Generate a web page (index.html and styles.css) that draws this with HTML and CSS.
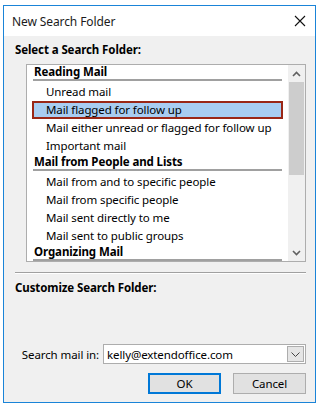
FILE: index.html
```html
<!DOCTYPE html>
<html lang="en">
<head>
    <meta charset="UTF-8">
    <title>New Search Folder</title>
    <link rel="stylesheet" href="styles.css">
</head>
<body>

    <div class="window">
        <div class="titlebar">
            <span class="title">New Search Folder</span>
            <svg class="close" width="12" height="12" viewBox="0 0 12 12">
                <path d="M1 1 L11 11 M11 1 L1 11" stroke="#111" stroke-width="1.1" fill="none"/>
            </svg>
        </div>

        <div class="dialog-body">
            <div class="label bold">Select a Search Folder:</div>

            <div class="listbox">
                <div class="list-items">
                    <div class="group">Reading Mail</div>
                    <div class="item">Unread mail</div>
                    <div class="item selected">Mail flagged for follow up</div>
                    <div class="item">Mail either unread or flagged for follow up</div>
                    <div class="item">Important mail</div>
                    <div class="group">Mail from People and Lists</div>
                    <div class="item">Mail from and to specific people</div>
                    <div class="item">Mail from specific people</div>
                    <div class="item">Mail sent directly to me</div>
                    <div class="item">Mail sent to public groups</div>
                    <div class="group">Organizing Mail</div>
                </div>
                <div class="scrollbar">
                    <div class="arrow">
                        <svg width="9" height="6" viewBox="0 0 9 6"><path d="M1 5 L4.5 1.5 L8 5" stroke="#606060" stroke-width="1.6" fill="none"/></svg>
                    </div>
                    <div class="track">
                        <div class="thumb"></div>
                    </div>
                    <div class="arrow">
                        <svg width="9" height="6" viewBox="0 0 9 6"><path d="M1 1 L4.5 4.5 L8 1" stroke="#606060" stroke-width="1.6" fill="none"/></svg>
                    </div>
                </div>
            </div>

            <div class="separator"></div>

            <div class="label bold custom-label">Customize Search Folder:</div>

            <div class="search-row">
                <span class="search-label">Search mail in:</span>
                <div class="combo">
                    <span class="combo-text">kelly@extendoffice.com</span>
                    <div class="combo-btn">
                        <svg width="9" height="5" viewBox="0 0 9 5"><path d="M0.5 0.5 L4.5 4.5 L8.5 0.5" stroke="#444" stroke-width="1" fill="none"/></svg>
                    </div>
                </div>
            </div>

            <div class="buttons">
                <button class="btn default">OK</button>
                <button class="btn">Cancel</button>
            </div>
        </div>
    </div>

</body>
</html>
```

FILE: styles.css
```css
body {
    margin: 0;
    background-color: #ffffff;
    font-family: "Noto Sans", "Open Sans", sans-serif;
    font-size: 11.5px;
    letter-spacing: -0.1px;
    color: #000;
}

.window {
    margin: 5px 0 0 3px;
    width: 311px;
    height: 396px;
    border: 1px solid #1a84d8;
    display: flex;
    flex-direction: column;
}

.titlebar {
    height: 30px;
    background-color: #ffffff;
    display: flex;
    align-items: center;
    justify-content: space-between;
    padding: 0 8px 0 8px;
}

.title {
    font-size: 12px;
    color: #1b1b1b;
}

.close {
    margin-right: 1px;
}

.dialog-body {
    flex: 1;
    background-color: #f0f0f0;
    padding: 6px 9px 0 11px;
    display: flex;
    flex-direction: column;
}

.label {
    line-height: 16px;
}

.bold {
    font-weight: bold;
}

/* Folder list */
.listbox {
    margin: 6px 0 0 11px;
    height: 196px;
    border: 1px solid #adadad;
    background-color: #ffffff;
    display: flex;
    overflow: hidden;
}

.list-items {
    flex: 1;
    overflow: hidden;
    white-space: nowrap;
}

.group {
    margin: 0 6px 2px 6px;
    padding-left: 1px;
    height: 14px;
    line-height: 14px;
    font-weight: bold;
    border-bottom: 2px solid #a0a0a0;
}

.item {
    margin: 0 5px;
    height: 18px;
    line-height: 18px;
    padding-left: 14px;
}

.item.selected {
    background-color: #a8cdf1;
    border: 2px solid #9a2716;
    height: 14px;
    line-height: 14px;
    padding-left: 12px;
}

.scrollbar {
    width: 17px;
    background-color: #f0f0f0;
    display: flex;
    flex-direction: column;
}

.arrow {
    height: 17px;
    display: flex;
    align-items: center;
    justify-content: center;
}

.track {
    flex: 1;
}

.thumb {
    height: 93px;
    margin: 0 1px;
    background-color: #cdcdcd;
}

.separator {
    margin-top: 10px;
    border-top: 1px solid #a0a0a0;
    border-bottom: 1px solid #ffffff;
}

.custom-label {
    margin-top: 6px;
}

/* Search mail in row */
.search-row {
    margin-top: 48px;
    display: flex;
    align-items: center;
    justify-content: flex-end;
}

.search-label {
    margin-right: 4px;
}

.combo {
    width: 201px;
    height: 18px;
    border: 1px solid #adadad;
    background-color: #ffffff;
    display: flex;
    align-items: center;
    justify-content: space-between;
}

.combo-text {
    padding-left: 3px;
}

.combo-btn {
    width: 15px;
    height: 14px;
    margin-right: 1px;
    border: 1px solid #adadad;
    background-color: #e5e5e5;
    display: flex;
    align-items: center;
    justify-content: center;
}

.buttons {
    margin-top: 9px;
    display: flex;
    justify-content: flex-end;
    gap: 12px;
}

.btn {
    width: 73px;
    height: 21px;
    border: 1px solid #adadad;
    background-color: #e1e1e1;
    font-family: "Noto Sans", "Open Sans", sans-serif;
    font-size: 11.5px;
    letter-spacing: -0.1px;
    padding: 0;
}

.btn.default {
    border: 2px solid #0078d7;
}
```
